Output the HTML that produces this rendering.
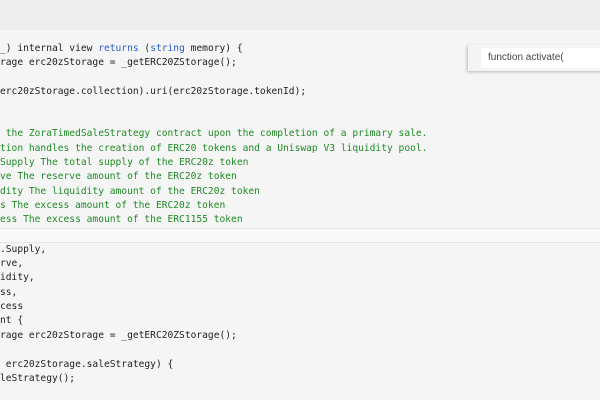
<html><head><style>
body{margin:0;width:600px;height:400px;overflow:hidden;background:#f5f5f5;position:relative;font-family:"DejaVu Sans Mono","Liberation Mono",monospace}
.top{position:absolute;left:0;top:0;width:600px;height:30px;background:#eeeeee}
.l{position:absolute;left:0;font-size:9.6px;white-space:pre;color:#1e1e1e;line-height:12px}
.g{color:#1f8a26}.b{color:#2a5fd0}
.sep{position:absolute;left:0;top:228px;width:600px;height:13px;background:#f8f8f8;border-top:1px solid #e6e6e6;border-bottom:1px solid #e6e6e6}
.box{position:absolute;left:468px;top:45px;width:140px;height:26px;background:#f4f4f4;box-shadow:-1px 1px 3px rgba(0,0,0,.25)}
.inp{position:absolute;left:481px;top:48px;width:125px;height:20px;background:#fff;font-family:"Liberation Sans",sans-serif;font-size:10px;color:#444;line-height:20px;padding-left:7px;box-sizing:border-box}
</style></head><body>
<div class="top"></div>
<div class="l" style="top:43px">_) internal view <span class="b">returns</span> (<span class="b">string</span> memory) {</div>
<div class="l" style="top:57px">rage erc20zStorage = _getERC20ZStorage();</div>
<div class="l" style="top:86px">erc20zStorage.collection).uri(erc20zStorage.tokenId);</div>
<div class="l g" style="top:128px"> the ZoraTimedSaleStrategy contract upon the completion of a primary sale.</div>
<div class="l g" style="top:143px">tion handles the creation of ERC20 tokens and a Uniswap V3 liquidity pool.</div>
<div class="l g" style="top:157px">Supply The total supply of the ERC20z token</div>
<div class="l g" style="top:171px">ve The reserve amount of the ERC20z token</div>
<div class="l g" style="top:186px">dity The liquidity amount of the ERC20z token</div>
<div class="l g" style="top:200px">s The excess amount of the ERC20z token</div>
<div class="l g" style="top:214px">ess The excess amount of the ERC1155 token</div>
<div class="sep"></div>
<div class="l" style="top:244px">.Supply,</div>
<div class="l" style="top:258px">rve,</div>
<div class="l" style="top:272px">idity,</div>
<div class="l" style="top:287px">ss,</div>
<div class="l" style="top:301px">cess</div>
<div class="l" style="top:315px">nt {</div>
<div class="l" style="top:330px">rage erc20zStorage = _getERC20ZStorage();</div>
<div class="l" style="top:359px"> erc20zStorage.saleStrategy) {</div>
<div class="l" style="top:373px">leStrategy();</div>
<div class="box"></div>
<div class="inp">function activate(</div>
</body></html>
